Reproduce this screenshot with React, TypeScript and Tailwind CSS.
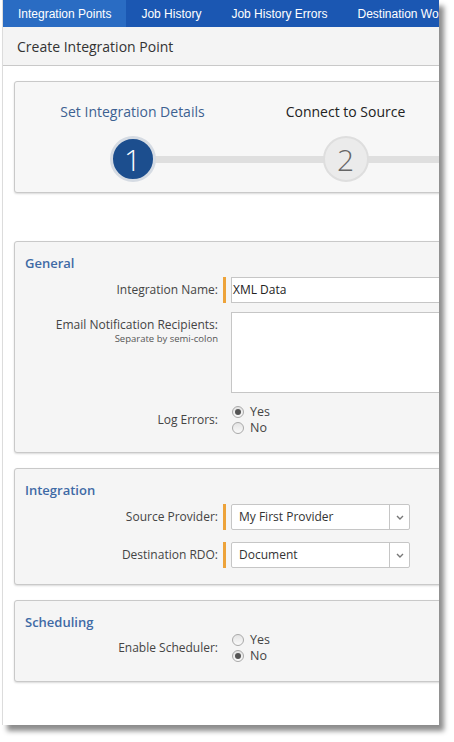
import React from 'react';

const tabs = ['Integration Points', 'Job History', 'Job History Errors', 'Destination Workspace'];

const Radio = ({ checked, label }: { checked: boolean; label: string }) => (
  <div className="flex items-center h-[16px]">
    <span className="w-[12px] h-[12px] rounded-full border border-[#a9a9a9] bg-gradient-to-b from-[#e4e4e4] to-[#fafafa] flex items-center justify-center">
      {checked && <span className="w-[6px] h-[6px] rounded-full bg-[#555]" />}
    </span>
    <span className="ml-[6px] text-[12.5px] text-[#444]">{label}</span>
  </div>
);

const Row = ({
  label,
  sub,
  required,
  top,
  children,
}: {
  label: string;
  sub?: string;
  required?: boolean;
  top?: boolean;
  children: React.ReactNode;
}) => (
  <div className={`flex ${top ? 'items-start' : 'items-center'}`}>
    <div className={`w-[203px] shrink-0 text-right text-[12px] text-[#444] ${top ? 'pt-[5px]' : ''}`}>
      <div className="leading-[16px]">{label}</div>
      {sub && <div className="text-[9.5px] leading-[12px] text-[#555]">{sub}</div>}
    </div>
    <div className="w-[13px] shrink-0 self-stretch flex">
      {required && <div className="ml-[5px] w-[3px] bg-[#eda33a]" />}
    </div>
    {children}
  </div>
);

const Select = ({ value }: { value: string }) => (
  <div className="w-[179px] h-[26px] bg-white border border-[#c6c6c6] rounded-[2px] flex items-center">
    <div className="flex-1 pl-[7px] text-[12px] text-[#333]">{value}</div>
    <div className="w-[20px] h-full border-l border-[#c6c6c6] flex items-center justify-center">
      <svg width="8" height="5" viewBox="0 0 8 5">
        <path d="M1 1 L4 4 L7 1" fill="none" stroke="#777" strokeWidth="1.4" />
      </svg>
    </div>
  </div>
);

const Panel = ({ title, children, className }: { title: string; children: React.ReactNode; className?: string }) => (
  <div className={`w-[480px] bg-[#f5f5f5] border border-[#c9c9c9] rounded-[3px] shadow-[0_1px_2px_rgba(0,0,0,0.15)] ${className ?? ''}`}>
    <div className="pl-[10px] text-[13px] font-semibold text-[#3f6aa5] leading-[18px]">{title}</div>
    {children}
  </div>
);

export default function App() {
  return (
    <div className="bg-white min-h-screen" style={{ fontFamily: '"Open Sans", sans-serif' }}>
      <div className="ml-[2px] w-[437px] h-[725px] bg-white overflow-hidden shadow-[5px_6px_5px_rgba(0,0,0,0.45)] border-l border-[#dcdcdc]">
        {/* tabs */}
        <div className="h-[27px] bg-[#1b57b2] flex whitespace-nowrap overflow-hidden" style={{ fontFamily: '"Liberation Sans", Arial, sans-serif' }}>
          {tabs.map((t, i) => (
            <div
              key={t}
              className={`px-[15px] h-full flex items-center text-[12px] text-white ${i === 0 ? 'bg-[#2a6cc3]' : ''}`}
            >
              {t}
            </div>
          ))}
        </div>

        {/* header */}
        <div className="h-[39px] bg-[#f4f4f4] border-b border-[#c9c9c9] flex items-center pl-[14px] text-[14px] text-[#333]">
          Create Integration Point
        </div>

        <div className="pl-[11px] pt-[15px]">
          {/* steps */}
          <div className="w-[480px] h-[112px] bg-[#f7f7f7] border border-[#c9c9c9] rounded-[3px] shadow-[0_1px_2px_rgba(0,0,0,0.15)] flex pl-[11px] pt-[20px] overflow-hidden">
            {[
              { n: '1', label: 'Set Integration Details', active: true },
              { n: '2', label: 'Connect to Source', active: false },
            ].map((s, i) => (
              <div key={s.n} className="w-[213px] shrink-0 flex flex-col items-center">
                <div className={`h-[20px] leading-[20px] text-[14px] ${s.active ? 'text-[#3d6191]' : 'text-[#222]'}`}>
                  {s.label}
                </div>
                <div className="relative w-full h-[46px] mt-[14px] flex items-center justify-center">
                  {i > 0 && <div className="absolute left-0 w-1/2 h-[7px] bg-[#dfdfdf]" />}
                  <div className="absolute right-0 w-1/2 h-[7px] bg-[#dfdfdf]" />
                  <div
                    className={`relative w-[46px] h-[46px] rounded-full flex items-center justify-center text-[30px] font-light ${
                      s.active
                        ? 'bg-[#1c4e8e] text-white border-[3px] border-[#d5dbe3]'
                        : 'bg-[#ebebeb] text-[#666] border-[2px] border-[#dedede]'
                    }`}
                  >
                    {s.n}
                  </div>
                </div>
              </div>
            ))}
          </div>

          {/* general */}
          <Panel title="General" className="mt-[48px] pt-[12px] pb-[16px]">
            <div className="mt-[5px] flex flex-col">
              <Row label="Integration Name:" required>
                <div className="w-[260px] h-[26px] bg-white border border-[#c6c6c6] flex items-center pl-[1px] text-[12px] text-[#222]">
                  XML Data
                </div>
              </Row>
              <div className="mt-[9px]">
                <Row label="Email Notification Recipients:" sub="Separate by semi-colon" top>
                  <div className="w-[260px] h-[81px] bg-white border border-[#c6c6c6]" />
                </Row>
              </div>
              <div className="mt-[11px]">
                <Row label="Log Errors:">
                  <div className="pl-[1px] flex flex-col">
                    <Radio checked label="Yes" />
                    <Radio checked={false} label="No" />
                  </div>
                </Row>
              </div>
            </div>
          </Panel>

          {/* integration */}
          <Panel title="Integration" className="mt-[15px] pt-[12px] pb-[16px]">
            <div className="mt-[5px] flex flex-col">
              <Row label="Source Provider:" required>
                <Select value="My First Provider" />
              </Row>
              <div className="mt-[12px]">
                <Row label="Destination RDO:" required>
                  <Select value="Document" />
                </Row>
              </div>
            </div>
          </Panel>

          {/* scheduling */}
          <Panel title="Scheduling" className="mt-[15px] pt-[12px] pb-[17px]">
            <div className="mt-[1px]">
              <Row label="Enable Scheduler:">
                <div className="pl-[1px] flex flex-col">
                  <Radio checked={false} label="Yes" />
                  <Radio checked label="No" />
                </div>
              </Row>
            </div>
          </Panel>
        </div>
      </div>
    </div>
  );
}
